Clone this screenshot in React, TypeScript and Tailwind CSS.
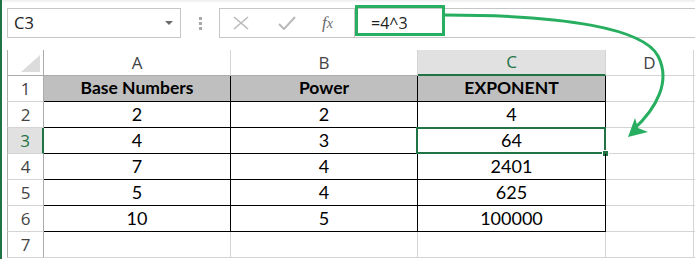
import React from 'react';

const rows = [
  ['Base Numbers', 'Power', 'EXPONENT'],
  ['2', '2', '4'],
  ['4', '3', '64'],
  ['7', '4', '2401'],
  ['5', '4', '625'],
  ['10', '5', '100000'],
  ['', '', ''],
];

function ColHeader({ label, className }: { label: string; className: string }) {
  return (
    <div
      className={`flex h-[26px] shrink-0 items-center justify-center border-r border-b border-r-[#d4d4d4] font-['Open_Sans',sans-serif] text-[17px] text-[#444] ${className}`}
    >
      {label}
    </div>
  );
}

export default function App() {
  return (
    <div className="relative h-[259px] w-[695px] overflow-hidden border-l-2 border-[#217346] bg-white">
      {/* top strip */}
      <div className="h-[3px] bg-gradient-to-b from-[#ececec] to-white" />

      {/* formula bar row */}
      <div className="mt-[5px] flex h-[30px] pl-[5px]">
        <div className="flex w-[174px] shrink-0 items-center justify-between border border-[#c6c6c6] pl-[6px] pr-[7px] font-['Open_Sans',sans-serif] text-[16.5px] text-[#222]">
          <span>C3</span>
          <span className="h-0 w-0 border-x-[4px] border-t-[4px] border-x-transparent border-t-[#6a6a6a]" />
        </div>
        <div className="flex w-[38px] shrink-0 flex-col items-center justify-center gap-[2px]">
          <span className="h-[3px] w-[3px] bg-[#a9a9a9]" />
          <span className="h-[3px] w-[3px] bg-[#a9a9a9]" />
          <span className="h-[3px] w-[3px] bg-[#a9a9a9]" />
        </div>
        <div className="flex flex-1 border-y border-l border-[#c6c6c6]">
          <div className="flex w-[135px] shrink-0 items-center border-r border-[#c6c6c6] pl-[13px]">
            <svg className="shrink-0" width="16" height="14" viewBox="0 0 16 14">
              <path d="M1 1 L15 13 M15 1 L1 13" stroke="#b9b9b9" strokeWidth="1.6" fill="none" />
            </svg>
            <svg className="ml-[29px] shrink-0" width="18" height="14" viewBox="0 0 18 14">
              <path d="M1 8 L6 13 L17 1" stroke="#b9b9b9" strokeWidth="2" fill="none" />
            </svg>
            <span className="ml-[26px] font-['Liberation_Serif',serif] text-[17px] italic text-[#6b6b6b]">
              f<span className="text-[14px]">x</span>
            </span>
          </div>
          <div className="flex items-center pl-[16px] font-['Open_Sans',sans-serif] text-[16px] text-[#222]">
            =4^3
          </div>
        </div>
      </div>

      {/* sheet */}
      <div className="mt-[12px] pl-[5px] font-['Lato',sans-serif] text-[18px] text-black">
        {/* column headers */}
        <div className="flex">
          <div className="relative h-[26px] w-[37px] shrink-0 border-x border-b border-[#ababab]">
            <svg className="absolute bottom-[3px] right-[3px]" width="19" height="17" viewBox="0 0 19 17">
              <polygon points="19,0 19,17 0,17" fill="#dcdcdc" />
            </svg>
          </div>
          <ColHeader label="A" className="w-[187px] border-b-[#ababab]" />
          <ColHeader label="B" className="w-[187px] border-b-[#ababab]" />
          <ColHeader
            label="C"
            className="w-[188px] border-b-2 border-b-[#217346] bg-[#e1e1e1] !text-[#217346]"
          />
          <ColHeader label="D" className="w-[88px] border-b-[#d4d4d4]" />
          <div className="h-[26px] flex-1 border-b border-[#d4d4d4]" />
        </div>

        {rows.map((r, i) => {
          const inTable = i < 6;
          const isHead = i === 0;
          const selRow = i === 2;
          const cellBorder = inTable ? 'border-black' : 'border-[#d4d4d4]';
          return (
            <div key={i} className="flex">
              <div
                className={`flex h-[26px] w-[37px] shrink-0 items-center justify-center border-l border-b border-l-[#ababab] border-b-[#d4d4d4] font-['Open_Sans',sans-serif] text-[17px] ${
                  selRow
                    ? 'border-r-2 border-r-[#217346] bg-[#e1e1e1] text-[#217346]'
                    : 'border-r border-r-[#ababab] text-[#444]'
                }`}
              >
                {i + 1}
              </div>
              {r.map((v, j) => (
                <div
                  key={j}
                  className={`relative flex h-[26px] shrink-0 items-center justify-center border-r border-b ${cellBorder} ${
                    j === 2 ? 'w-[188px]' : 'w-[187px]'
                  } ${isHead ? 'bg-[#bfbfbf] text-[17.5px] font-bold' : ''}`}
                >
                  {v}
                  {selRow && j === 2 && (
                    <>
                      <div className="absolute -top-[1px] -right-[1px] -bottom-[1px] -left-[2px] border-2 border-[#217346]" />
                      <div className="absolute -right-[4px] -bottom-[4px] h-[7px] w-[7px] border border-white bg-[#217346]" />
                    </>
                  )}
                </div>
              ))}
              <div className="h-[26px] w-[88px] shrink-0 border-r border-b border-[#d4d4d4]" />
              <div className="h-[26px] flex-1 border-b border-[#d4d4d4]" />
            </div>
          );
        })}
      </div>

      {/* annotation: formula box and arrow */}
      <div className="absolute top-[5px] left-[353px] h-[31px] w-[90px] border-[3px] border-[#27ae60]" />
      <svg className="pointer-events-none absolute top-0 left-0" width="695" height="259" viewBox="0 0 695 259">
        <path
          d="M443 15 C 565 15 642 29 656 56 C 669 81 655 108 631 130"
          stroke="#27ae60"
          strokeWidth="3"
          fill="none"
        />
        <polygon points="626,137 646,132 636,128 633,118" fill="#27ae60" />
      </svg>
    </div>
  );
}
